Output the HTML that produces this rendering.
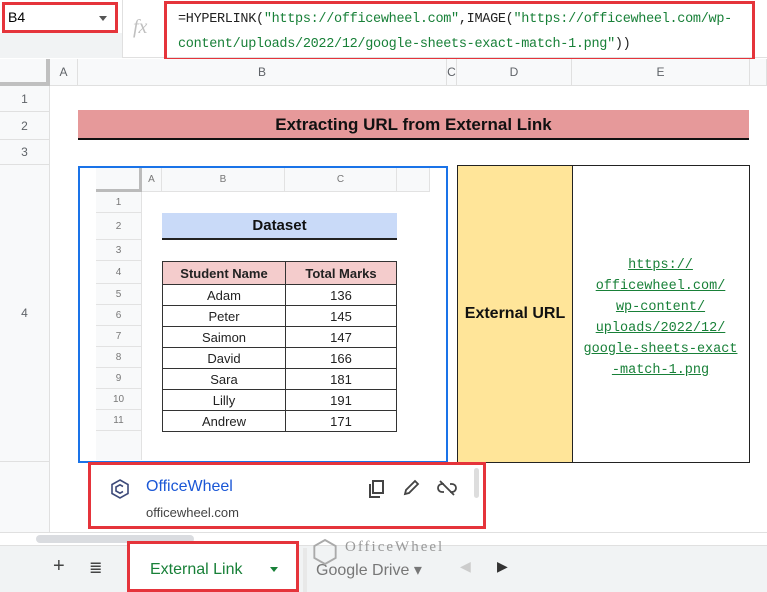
<!DOCTYPE html>
<html><head><meta charset="utf-8"><style>
*{margin:0;padding:0;box-sizing:border-box}
body{width:767px;height:592px;overflow:hidden;background:#fff;font-family:"Liberation Sans",Arial,sans-serif;position:relative}
.a{position:absolute}
.hd{background:#f8f9fa;color:#5f6368;font-size:12px;display:flex;align-items:center;justify-content:center;border-right:1px solid #e0e0e0;border-bottom:1px solid #e0e0e0}
.mono{font-family:"Liberation Mono",monospace}
.ih{background:#f8f9fa;color:#777;font-size:10px;display:flex;align-items:center;justify-content:center;border-right:1px solid #e2e2e2;border-bottom:1px solid #e2e2e2}
.tr{display:flex;height:21px;border-bottom:1.5px solid #333}
.tr div{display:flex;align-items:center;justify-content:center;font-size:13px;color:#222}
</style></head><body>
<div class="a" style="left:0;top:0;width:767px;height:58px;background:#fff;border-bottom:1px solid #e0e0e0"></div>
<div class="a" style="left:2px;top:2px;width:116px;height:31px;border:3px solid #e5343b;font-size:14px;padding:4px 3px;color:#000">B4<span class="a" style="right:8px;top:11px;border:4px solid transparent;border-top:5px solid #555"></span></div>
<div class="a" style="left:0;top:33px;width:122px;height:25px;background:#f1f3f4"></div>
<div class="a" style="left:122px;top:0;width:40px;height:58px;border-left:1px solid #e0e0e0;color:#c0c0c0;font-family:'Liberation Serif',serif;font-style:italic;font-size:20px;padding:16px 0 0 10px">fx</div>
<div class="a mono" style="left:164px;top:1px;width:591px;height:60px;border:3px solid #e5343b;font-size:13.5px;line-height:25px;padding:3px 0 0 11px;color:#222;letter-spacing:-0.3px">=HYPERLINK(<span style="color:#188038">"https://officewheel.com"</span>,IMAGE(<span style="color:#188038">"https://officewheel.com/wp-<br>content/uploads/2022/12/google-sheets-exact-match-1.png"</span>))</div>
<div class="a hd" style="left:0;top:59px;width:50px;height:27px;border-right:4px solid #c0c0c0;border-bottom:4px solid #c0c0c0"></div>
<div class="a hd" style="left:50px;top:59px;width:28px;height:27px">A</div>
<div class="a hd" style="left:78px;top:59px;width:369px;height:27px">B</div>
<div class="a hd" style="left:447px;top:59px;width:10px;height:27px">C</div>
<div class="a hd" style="left:457px;top:59px;width:115px;height:27px">D</div>
<div class="a hd" style="left:572px;top:59px;width:178px;height:27px">E</div>
<div class="a hd" style="left:750px;top:59px;width:17px;height:27px"></div>
<div class="a" style="left:0;top:86px;width:50px;height:446px;background:#f8f9fa;border-right:1px solid #e0e0e0"></div>
<div class="a hd" style="left:0;top:86px;width:50px;height:26px">1</div>
<div class="a hd" style="left:0;top:112px;width:50px;height:28px">2</div>
<div class="a hd" style="left:0;top:140px;width:50px;height:25px">3</div>
<div class="a hd" style="left:0;top:165px;width:50px;height:297px">4</div>
<div class="a" style="left:78px;top:110px;width:671px;height:30px;background:#e6999a;border-bottom:2px solid #111;font-weight:bold;font-size:17px;text-align:center;line-height:29px;color:#111">Extracting URL from External Link</div>
<div class="a" style="left:78px;top:166px;width:370px;height:297px;border:2px solid #1a73e8"></div>
<div class="a" style="left:96px;top:168px;width:334px;height:292px;background:#fff">
 <div class="a ih" style="left:0;top:0;width:46px;height:24px;border-right:3px solid #bbb;border-bottom:3px solid #bbb"></div>
 <div class="a ih" style="left:46px;top:0;width:20px;height:24px">A</div>
 <div class="a ih" style="left:66px;top:0;width:123px;height:24px">B</div>
 <div class="a ih" style="left:189px;top:0;width:112px;height:24px">C</div>
 <div class="a ih" style="left:301px;top:0;width:33px;height:24px"></div>
 <div class="a" style="left:0;top:24px;width:46px;height:268px;background:#f8f9fa;border-right:1px solid #e2e2e2"></div>
 <div class="a ih" style="left:0;top:24px;width:46px;height:21px">1</div>
 <div class="a ih" style="left:0;top:45px;width:46px;height:27px">2</div>
 <div class="a ih" style="left:0;top:72px;width:46px;height:21px">3</div>
 <div class="a ih" style="left:0;top:93px;width:46px;height:23px">4</div>
 <div class="a ih" style="left:0;top:116px;width:46px;height:21px">5</div>
 <div class="a ih" style="left:0;top:137px;width:46px;height:21px">6</div>
 <div class="a ih" style="left:0;top:158px;width:46px;height:21px">7</div>
 <div class="a ih" style="left:0;top:179px;width:46px;height:21px">8</div>
 <div class="a ih" style="left:0;top:200px;width:46px;height:21px">9</div>
 <div class="a ih" style="left:0;top:221px;width:46px;height:21px">10</div>
 <div class="a ih" style="left:0;top:242px;width:46px;height:21px">11</div>
 <div class="a" style="left:66px;top:45px;width:235px;height:27px;background:#c9daf8;border-bottom:2px solid #222;font-weight:bold;font-size:15px;text-align:center;line-height:25px;color:#111">Dataset</div>
 <div class="a" style="left:66px;top:93px;width:235px;border:1.5px solid #333;border-bottom:none">
  <div class="tr" style="height:23px;background:#f4cccc"><div style="width:123px;border-right:1.5px solid #333;font-weight:bold">Student Name</div><div style="flex:1;font-weight:bold">Total Marks</div></div>
  <div class="tr"><div style="width:123px;border-right:1.5px solid #333">Adam</div><div style="flex:1">136</div></div>
  <div class="tr"><div style="width:123px;border-right:1.5px solid #333">Peter</div><div style="flex:1">145</div></div>
  <div class="tr"><div style="width:123px;border-right:1.5px solid #333">Saimon</div><div style="flex:1">147</div></div>
  <div class="tr"><div style="width:123px;border-right:1.5px solid #333">David</div><div style="flex:1">166</div></div>
  <div class="tr"><div style="width:123px;border-right:1.5px solid #333">Sara</div><div style="flex:1">181</div></div>
  <div class="tr"><div style="width:123px;border-right:1.5px solid #333">Lilly</div><div style="flex:1">191</div></div>
  <div class="tr"><div style="width:123px;border-right:1.5px solid #333">Andrew</div><div style="flex:1">171</div></div>
 </div>
</div>
<div class="a" style="left:457px;top:165px;width:116px;height:298px;background:#ffe599;border:1.5px solid #222;font-weight:bold;font-size:16px;display:flex;align-items:center;justify-content:center;color:#111">External URL</div>
<div class="a mono" style="left:572px;top:165px;width:178px;height:298px;border:1.5px solid #222;border-left:none;font-size:13.5px;line-height:21px;text-align:center;color:#188038;text-decoration:underline;padding-top:89px">https://<br>officewheel.com/<br>wp-content/<br>uploads/2022/12/<br>google-sheets-exact<br>-match-1.png</div>
<div class="a" style="left:88px;top:462px;width:398px;height:67px;border:3px solid #e5343b;background:#fff">
 <svg class="a" style="left:20px;top:14px" width="18" height="20" viewBox="0 0 18 20"><path d="M9 1L17 5.5V14.5L9 19L1 14.5V5.5Z" fill="none" stroke="#3d4a7a" stroke-width="1.6"/><path d="M12 7.5L9 5.8L5 8V12L9 14.2L12 12.5" fill="none" stroke="#3d4a7a" stroke-width="1.6"/></svg>
 <div class="a" style="left:55px;top:13px;font-size:16px;color:#1a57d6">OfficeWheel</div>
 <div class="a" style="left:55px;top:40px;font-size:13px;color:#444">officewheel.com</div>
 <svg class="a" style="left:276px;top:14px" width="20" height="20" viewBox="0 0 20 20"><rect x="6" y="2" width="10" height="12" fill="none" stroke="#444" stroke-width="2"/><path d="M3 5V18H13" fill="none" stroke="#444" stroke-width="2"/></svg>
 <svg class="a" style="left:311px;top:14px" width="18" height="18" viewBox="0 0 18 18"><path d="M3 15L4 11L13 2L16 5L7 14Z" fill="none" stroke="#444" stroke-width="1.8"/></svg>
 <svg class="a" style="left:346px;top:14px" width="20" height="18" viewBox="0 0 20 18"><path d="M7 5H5a4 4 0 0 0 0 8h2M13 5h2a4 4 0 0 1 0 8h-2M3 2L17 16" fill="none" stroke="#444" stroke-width="1.8"/></svg>
 <div class="a" style="left:383px;top:3px;width:5px;height:30px;background:#ddd;border-radius:3px"></div>
</div>
<div class="a" style="left:0;top:532px;width:767px;height:13px;background:#fff;border-top:1px solid #e0e0e0"><div class="a" style="left:36px;top:2px;width:158px;height:8px;background:#dadce0;border-radius:4px"></div></div>
<div class="a" style="left:0;top:545px;width:767px;height:47px;background:#f1f3f4;border-top:1px solid #e0e0e0"></div>
<div class="a" style="left:53px;top:555px;font-size:20px;color:#444">+</div>
<div class="a" style="left:89px;top:558px;font-size:16px;color:#444">≣</div>
<div class="a" style="left:127px;top:541px;width:172px;height:51px;border:3px solid #e5343b;background:#fff;color:#188038;font-size:16px;padding:17px 0 0 20px">External Link<span class="a" style="left:140px;top:23px;border:4px solid transparent;border-top:5px solid #188038"></span></div>
<div class="a" style="left:316px;top:560px;font-size:16px;color:#777">Google Drive ▾</div>
<div class="a" style="left:303px;top:548px;width:4px;height:44px;background:#e8e8e8"></div>
<div class="a" style="left:315px;top:539px;font-family:'Liberation Serif',serif;font-size:15px;color:#999;letter-spacing:2px;padding-left:30px">OfficeWheel</div>
<svg class="a" style="left:313px;top:538px" width="24" height="28" viewBox="0 0 18 20"><path d="M9 1L17 5.5V14.5L9 19L1 14.5V5.5Z" fill="none" stroke="#aaa" stroke-width="1.4"/></svg>
<div class="a" style="left:460px;top:558px;color:#ccc;font-size:14px">◀</div>
<div class="a" style="left:497px;top:558px;color:#333;font-size:14px">▶</div>
</body></html>
